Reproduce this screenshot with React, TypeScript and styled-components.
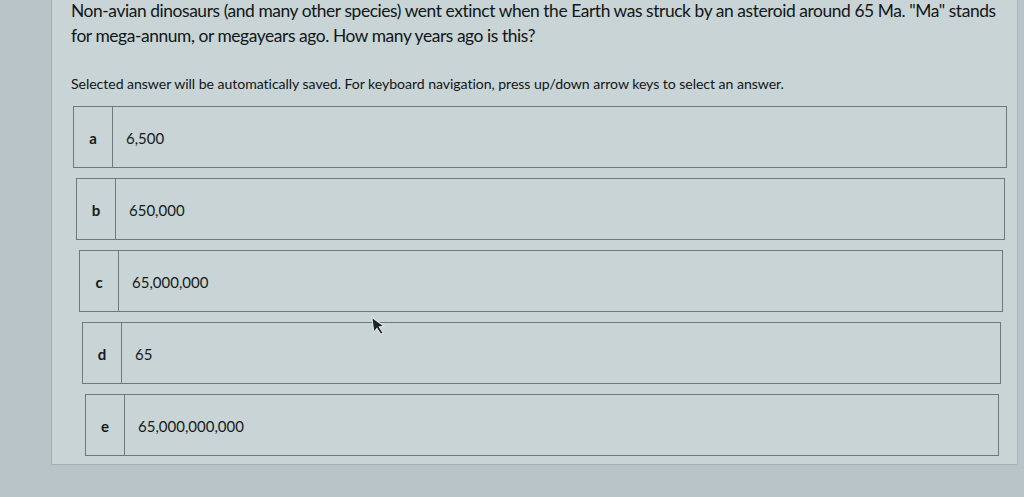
import React from 'react';
import styled, { createGlobalStyle } from 'styled-components';

const GlobalStyle = createGlobalStyle`
    html, body {
        margin: 0;
        padding: 0;
        background: #b8c4c7;
        overflow: hidden;
    }
`;

type Option = { key: string; label: string };

const options: Option[] = [
    { key: 'a', label: '6,500' },
    { key: 'b', label: '650,000' },
    { key: 'c', label: '65,000,000' },
    { key: 'd', label: '65' },
    { key: 'e', label: '65,000,000,000' },
];

export default function App() {
    return (
        <>
            <GlobalStyle />
            <Page>
                <Panel>
                    <Question>
                        Non-avian dinosaurs (and many other species) went extinct when the Earth was struck by an asteroid around 65 Ma. "Ma" stands for mega-annum, or megayears ago. How many years ago is this?
                    </Question>
                    <Hint>
                        Selected answer will be automatically saved. For keyboard navigation, press up/down arrow keys to select an answer.
                    </Hint>
                    <OptionList role="radiogroup">
                        {options.map((o, i) => (
                            <OptionRow key={o.key} role="radio" aria-checked={false} $index={i}>
                                <OptionKey>{o.key}</OptionKey>
                                <OptionText>{o.label}</OptionText>
                            </OptionRow>
                        ))}
                    </OptionList>
                    <Cursor viewBox="0 0 14 20" aria-hidden>
                        <path d="M1 1 L1 16 L4.5 12.5 L7.5 19 L10 18 L7 11.5 L12 11.5 Z" fill="#1d2224" stroke="#e4eaeb" strokeWidth="1" />
                    </Cursor>
                </Panel>
            </Page>
        </>
    );
}

const Page = styled.div`
    width: 1024px;
    height: 497px;
    overflow: hidden;
    font-family: 'Lato', 'Open Sans', sans-serif;
    color: #161a1b;
`;

const Panel = styled.div`
    position: relative;
    margin-left: 51px;
    width: 967px;
    height: 467px;
    box-sizing: border-box;
    padding: 0 0 0 19px;
    background: #c8d4d5;
    border-left: 1px solid #a3b0b3;
    border-bottom: 1px solid #a3b0b3;
    border-right: 1px solid #aab6b9;
`;

const Question = styled.p`
    margin: -2px 0 0;
    padding-right: 16px;
    font-size: 17.4px;
    letter-spacing: -0.42px;
    line-height: 25px;
    color: #121617;
`;

const Hint = styled.p`
    margin: 26px 0 0;
    font-size: 14.1px;
    line-height: 20px;
    letter-spacing: -0.05px;
    color: #121617;
`;

const OptionList = styled.div`
    margin-top: 12px;
    display: flex;
    flex-direction: column;
    gap: 10px;
`;

const OptionRow = styled.div<{ $index: number }>`
    display: flex;
    align-items: stretch;
    height: 62px;
    width: ${p => 934 - p.$index * 5}px;
    box-sizing: border-box;
    margin-left: ${p => 2 + p.$index * 3}px;
    border: 1.5px solid #6d7a7c;
    cursor: pointer;
`;

const OptionKey = styled.div`
    width: 38px;
    flex-shrink: 0;
    display: flex;
    align-items: center;
    justify-content: center;
    border-right: 1.5px solid #6d7a7c;
    font-size: 15px;
    font-weight: 700;
    padding-top: 2px;
`;

const OptionText = styled.div`
    display: flex;
    align-items: center;
    padding-left: 13px;
    padding-top: 2px;
    font-size: 15px;
`;

const Cursor = styled.svg`
    position: absolute;
    left: 320px;
    top: 317px;
    width: 14px;
    height: 21px;
    transform: rotate(-8deg);
`;
